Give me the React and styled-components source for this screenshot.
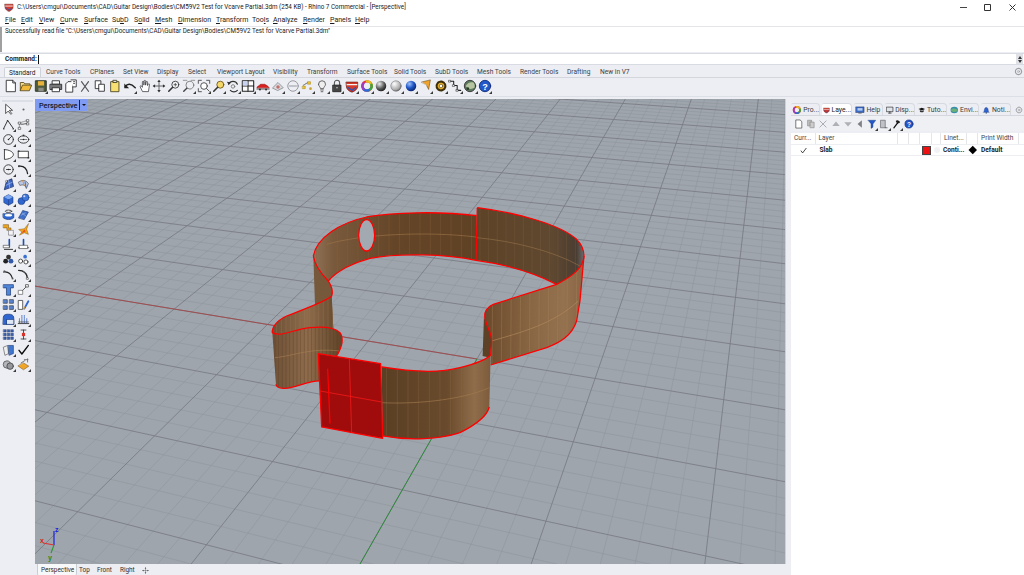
import React from "react";
import styled, { createGlobalStyle } from "styled-components";

const Global = createGlobalStyle`
  html, body { margin: 0; padding: 0; background: #eceef3; overflow: hidden; }
  body { font-family: Roboto, "Noto Sans", sans-serif; color: #1c1c20; }
  u { text-decoration-thickness: 0.6px; text-underline-offset: 1px; }
`;

const Page = styled.div`
  width: 1024px; height: 575px; display: flex; flex-direction: column; overflow: hidden; background: #eceef3;
`;
const TitleBar = styled.div`
  height: 14px; background: #fff; display: flex; align-items: center; padding-left: 4px; gap: 3px;
  font-size: 6.3px; flex: none;
`;
const TitleText = styled.span` flex: 1; white-space: nowrap; color: #202024; `;
const WinButtons = styled.div` display: flex; width: 65px; justify-content: space-between; padding-right: 7.5px; box-sizing: border-box; align-items: center; `;
const MenuBar = styled.div`
  height: 12px; background: #fff; display: flex; align-items: center; padding-left: 5px; font-size: 7px; flex: none;
  border-bottom: 1px solid #e3e5ea;
`;
const MenuItem = styled.span` width: ${p => p.$w}px; flex: none; white-space: nowrap; `;
const HistoryPane = styled.div`
  height: 25px; background: #fff; border-left: 2px solid #a0a0a0; padding: 0 0 0 3px; font-size: 6.3px; flex: none; box-sizing: border-box; line-height: 9px;
`;
const CommandRow = styled.div`
  height: 10px; margin-top: 1px; background: #fff; border-top: 1px solid #d8dbe2; border-bottom: 1px solid #d8dbe2;
  display: flex; align-items: center; padding-left: 5px; font-size: 6.5px; font-weight: 700; flex: none;
`;
const Caret = styled.span` width: 1px; height: 9px; background: #111; margin-left: 1px; `;
const Spinner = styled.span`
  margin-left: auto; margin-right: 1px; width: 7px; height: 10px; background: #dfe1e6; display: flex; flex-direction: column; align-items: center; justify-content: center; gap: 1px;
  &::before, &::after { content: ""; width: 0; height: 0; border-left: 2px solid transparent; border-right: 2px solid transparent; }
  &::before { border-bottom: 3px solid #333; }
  &::after { border-top: 3px solid #333; }
`;
const TabRow = styled.div`
  height: 11px; margin-top: 1px; display: flex; align-items: flex-end; font-size: 6.6px; border-bottom: 1px solid #d3d6dd; flex: none; padding-left: 4px; color: #3c3d42;
`;
const ToolTab = styled.span`
  width: ${p => p.$w}px; flex: none; height: 10px; line-height: 11px; padding-left: 5px; white-space: nowrap; box-sizing: border-box;
  ${p => p.$active && `background:#f6f7f9; border:1px solid #cfd2d9; border-bottom:none; border-radius:2px 2px 0 0; line-height:10px; padding-left:4px; color:#222;`}
`;
const GearSlot = styled.span` margin-left: auto; margin-right: 1px; height: 11px; display: flex; align-items: center; `;
const IconStrip = styled.div`
  height: 18px; display: flex; align-items: center; padding: 0 0 2px 4px; box-sizing: border-box; flex: none; border-bottom: 1px solid #dcdfe5; box-sizing: content-box; height: 16px;
`;
const IconCell = styled.span`
  width: ${p => p.$w || 14.8}px; height: 15px; display: flex; align-items: center; justify-content: center; position: relative; flex: none;
  ${p => p.$more && `&::after{content:"";position:absolute;right:0;bottom:0;width:0;height:0;border-left:3px solid transparent;border-bottom:3px solid #3a3a3a;}`}
`;
const Body = styled.div` flex: 1; display: flex; min-height: 0; padding-top: 2px; `;
const LeftCol = styled.div` width: 35px; flex: none; display: flex; flex-direction: column; padding-top: 1px; box-sizing: border-box; `;
const LeftGrip = styled.div` height: 2px; margin: 0 2px; background: #dcdfe6; flex: none; `;
const LeftGrid = styled.div` display: grid; grid-template-columns: 15px 15px; grid-auto-rows: 15px; padding-left: 1px; `;
const Center = styled.div` width: 751px; flex: none; display: flex; flex-direction: column; `;
const Viewport = styled.div` height: 465px; position: relative; overflow: hidden; background: #9fa5ac; flex: none; border-right: 1.5px solid #c9d1e0; box-sizing: border-box; `;
const ViewSvg = styled.svg` display: block; width: 100%; height: 100%; `;
const ViewLabel = styled.div`
  position: absolute; left: 0; top: 0; height: 12px; background: #7f9cf2; display: flex; align-items: center; padding: 0 1px 0 4px; font-size: 7.3px; font-weight: 500; color: #14161f; gap: 2px;
`;
const LabelArrow = styled.span`
  border-left: 1px solid #1c2040; height: 10px; width: 5px; display: flex; align-items: center; justify-content: center; padding-left: 1px;
  &::after { content: ""; width: 0; height: 0; border-left: 2px solid transparent; border-right: 2px solid transparent; border-top: 2px solid #111; }
`;
const ViewTabs = styled.div` height: 12px; display: flex; align-items: center; font-size: 6.4px; padding-left: 2px; color: #2c2c30; `;
const ViewTab = styled.span`
  width: ${p => p.$w}px; flex: none; padding-left: ${p => p.$pad}px; height: 12px; line-height: 12px; box-sizing: border-box; white-space: nowrap; display: flex; align-items: center;
  ${p => p.$active && `background:#f7f8fa; border-radius:0 0 3px 3px; border-left:1px solid #c8ccd4; border-right:1px solid #c8ccd4;`}
`;
const Panel = styled.div`
  width: 233px; flex: none; margin-left: 5px; display: flex; flex-direction: column; margin-top: 2px;
`;
const PanelTabs = styled.div` height: 14px; display: flex; align-items: flex-end; font-size: 6.8px; gap: 2px; border-bottom: 1px solid #d4d7de; color: #3a3b40; `;
const PanelTab = styled.span`
  width: ${p => p.$w}px; height: 12px; display: flex; align-items: center; gap: 1.500px; padding-left: 1px; box-sizing: border-box; white-space: nowrap; flex: none;
  border-top: 1px solid #d7dae1; border-right: 1px solid #d7dae1; border-radius: 2px 4px 0 0;
  ${p => p.$active && `background:#fff; color:#222;`}
`;
const PanelTools = styled.div` height: 15px; display: flex; align-items: center; padding-left: 2px; background: #eff0f4; `;
const Table = styled.div` flex: 1; background: #fff; font-size: 6.6px; display: flex; flex-direction: column; margin-top: 2px; `;
const TableHead = styled.div`
  height: 11px; display: grid; grid-template-columns: ${p => p.$cols}; background: #fff; border-bottom: 1px solid #eceef2; color: #45464b;
`;
const HeadCell = styled.span` border-right: 1px solid #e4e6ea; padding-left: 3px; line-height: 11px; white-space: nowrap; overflow: hidden; `;
const TableRow = styled.div`
  height: 10px; display: grid; grid-template-columns: ${p => p.$cols}; align-items: center; font-weight: 700; border-bottom: 1px solid #eceef2; color: #222;
`;
const RowCell = styled.span` padding-left: ${p => p.$pad || 0}px; display: flex; align-items: center; white-space: nowrap; justify-content: ${p => p.$center ? "center" : "flex-start"}; `;
const Swatch = styled.span` width: 7px; height: 7px; background: #ee1111; border: 0.5px solid #444; display: block; `;
const Dot = styled.span` width: 6px; height: 6px; border-radius: 50%; background: #f1f2f4; display: block; `;
const Diamond = styled.span` width: 5.5px; height: 5.5px; background: #000; transform: rotate(45deg); display: block; flex: none; `;

const S = ({ children, w = 14 }) => <svg width={w} height={w} viewBox="0 0 16 16" fill="none" strokeLinejoin="round" strokeLinecap="round">{children}</svg>;

const DK = "#2b2b2e";
const I = {
  file: <><path d="M3 1.5h7l3 3v10H3z" fill="#fff" stroke={DK} /><path d="M10 1.5v3h3" stroke={DK} /></>,
  open: <><path d="M1.5 13V4h4l1 1.5h6V7" fill="#f4dc8a" stroke="#5b4a1c" /><path d="M1.5 13l2.5-6h10.5l-2.5 6z" fill="#f0b93a" stroke="#5b4a1c" /></>,
  save: <><path d="M2 2h12v12H2z" fill="#4d5a3d" stroke="#1e2416" /><path d="M4.5 2.5h7v5h-7z" fill="#e7b33b" /><path d="M5 10h6v4H5z" fill="#8d8f88" /></>,
  print: <><path d="M4 2h8v4H4z" fill="#fff" stroke={DK} /><path d="M1.5 6h13v6h-13z" fill="#777" stroke={DK} /><path d="M4 10h8v4.5H4z" fill="#fff" stroke={DK} /></>,
  props: <><path d="M5 3h5v12H2V6z" fill="#fff" stroke={DK} /><path d="M8 1h6v8h-4" stroke={DK} fill="#fff" /><path d="M11 3h1M11 5h1" stroke={DK} /></>,
  cut: <><path d="M4 3l8 11M12 3l-8 11" stroke="#55565a" strokeWidth="1.4" /></>,
  copy: <><path d="M3 2h6v9H3z" fill="#fff" stroke={DK} /><path d="M7 6h6v8H7z" fill="#fff" stroke={DK} /></>,
  paste: <><path d="M3.5 3h9v11.5h-9z" fill="#f7df72" stroke="#4a4420" /><path d="M6 1.5h4V4H6z" fill="#ddd" stroke="#4a4420" /></>,
  undo: <><path d="M2.5 9C5 5 9 5 14 10" stroke="#222" strokeWidth="1.7" /><path d="M1.5 5v5.5H7" fill="#222" /></>,
  hand: <><path d="M5 14L2.5 9c-.5-1 1-2 1.7-.7L5 9.5V3.5c0-1.3 1.6-1.3 1.7 0V7l.3-4.500c0-1.300 1.700-1.300 1.700 0V7l.6-3.500c.2-1.200 1.700-1 1.600.2V7.500l.7-1.500c.5-1 1.800-.5 1.500.6L12 14z" fill="#fff" stroke={DK} strokeWidth=".8" /></>,
  pan: <><path d="M8 1.500v13M1.500 8h13" stroke="#555" /><path d="M8 1l-2 2.500h4zM8 15l-2-2.500h4zM1 8l2.500-2v4zM15 8l-2.500-2v4z" fill="#333" /></>,
  zoom: <><circle cx="9.500" cy="6.500" r="4" fill="#f4f5f7" stroke="#333" /><path d="M6.500 9.500L2 14" stroke="#333" strokeWidth="1.800" /><path d="M8 6.500h3M9.500 5v3" stroke="#333" strokeWidth=".8" /></>,
  zoomDash: <><circle cx="9" cy="7" r="4.500" stroke="#777" /><path d="M5.500 10.500L2 14" stroke="#444" strokeWidth="1.600" /><path d="M1.500 1.500h4M10.500 1.500h4" stroke="#888" strokeDasharray="1.500 1" /></>,
  zoomExt: <><circle cx="8" cy="8" r="3.800" fill="#fff" stroke="#444" /><path d="M11 11l3 3M1.500 5V1.500H5M11 1.500h3.500V5M1.500 11v3.500H5" stroke="#444" /></>,
  zoomSel: <><circle cx="9.500" cy="6.500" r="4" fill="#f6d86a" stroke="#6c5514" /><path d="M6.500 9.500L2 14" stroke="#333" strokeWidth="1.800" /></>,
  rotate: <><path d="M3 6a5.500 5.500 0 0 1 10 0" stroke="#333" strokeWidth="1.300" /><path d="M13 13a5.500 5.500 0 0 1-8 0" stroke="#333" strokeWidth="1.300" /><circle cx="8" cy="8.500" r="2" stroke="#777" /><path d="M1 3l2 3.500L6 4z" fill="#333" /></>,
  grid4: <><path d="M1.500 2h13v12h-13z" fill="#fdfdfd" stroke="#222" strokeWidth="1.200" /><path d="M8 2v12M1.500 8h13" stroke="#222" strokeWidth="1.200" /><path d="M2 2.500h5.500v5H2z" fill="#c9d5f0" /></>,
  car: <><path d="M1 10c0-2 3-2 4-4h5c1 1 4 1.500 5 4z" fill="#d8201e" stroke="#8a1010" strokeWidth=".6" /><path d="M1 11.500h14" stroke="#555" /><circle cx="4.500" cy="12" r="1.200" fill="#333" /><circle cx="11.500" cy="12" r="1.200" fill="#333" /></>,
  tool1: <><path d="M2 10l6-6 6 6-6 3z" fill="#d9dade" stroke="#8d8f96" /><circle cx="8" cy="9" r="2" fill="#c2716a" /></>,
  clock: <><circle cx="8" cy="8" r="6" stroke="#8d8f96" /><path d="M4 8h8" stroke="#8d8f96" /></>,
  lights: <><path d="M3 8h3v3H3zM9 3h3v3H9z" fill="#eec12f" stroke="#9a7b10" strokeWidth=".5" /><path d="M4 7l5-3" stroke="#555" strokeDasharray="1 1" /><circle cx="12" cy="11" r="1.500" fill="#c7a128" /></>,
  bulb: <><path d="M4 6a4 4 0 0 1 8 0c0 2-2 3-2.300 5H6.300C6 9 4 8 4 6z" fill="#eee" stroke="#555" /><path d="M6.500 12.500h3M7 14.500h2" stroke="#555" /></>,
  lock: <><path d="M5 7V4.500a3 3 0 0 1 6 0V7" stroke="#555" strokeWidth="1.200" /><path d="M3.500 7h9v7.500h-9z" fill="#444" stroke="#222" /><path d="M7.500 10h1" stroke="#ddd" /></>,
  layers: <><path d="M1.500 3.500h13v5c0 3-4 6-6.500 6.500C5 14.500 1.500 11.500 1.500 8.500z" fill="#d63a2b" stroke="#57150f" strokeWidth=".7" /><path d="M2.500 6.500h11" stroke="#f2f2f2" strokeWidth="1.500" /><path d="M4 10l4 3 4-3" stroke="#2853b8" strokeWidth="1.500" /></>,
  wheel: <><circle cx="8" cy="8" r="5.300" stroke="#e33" strokeWidth="2.800" /><path d="M8 2.700a5.300 5.300 0 0 1 5 3.500" stroke="#e6c21d" strokeWidth="2.800" /><path d="M13 6.500a5.300 5.300 0 0 1-3 6.300" stroke="#36a83c" strokeWidth="2.800" /><path d="M10 12.800a5.300 5.300 0 0 1-6-1.500" stroke="#2b6cdc" strokeWidth="2.800" /><path d="M4 11.300a5.300 5.300 0 0 1 0-6.500" stroke="#a43ac0" strokeWidth="2.800" /></>,
  ball1: <><defs><radialGradient id="gb" cx=".35" cy=".3" r=".8"><stop offset="0" stopColor="#ededed" /><stop offset=".6" stopColor="#555" /><stop offset="1" stopColor="#111" /></radialGradient></defs><circle cx="8" cy="8" r="6" fill="url(#gb)" /></>,
  ball2: <><defs><radialGradient id="gw" cx=".35" cy=".3" r=".8"><stop offset="0" stopColor="#fff" /><stop offset=".7" stopColor="#aaa" /><stop offset="1" stopColor="#555" /></radialGradient></defs><circle cx="8" cy="8" r="6" fill="url(#gw)" stroke="#555" strokeWidth=".5" /></>,
  ball4: <><defs><radialGradient id="gn" cx=".35" cy=".3" r=".8"><stop offset="0" stopColor="#9cc1f8" /><stop offset=".5" stopColor="#1f56c8" /><stop offset="1" stopColor="#061a5c" /></radialGradient></defs><circle cx="8" cy="8" r="6" fill="url(#gn)" /></>,
  pointer: <><path d="M3 3.500L13 1l-2 11-2.500-5z" fill="#f0a32a" stroke="#5e3c10" strokeWidth=".6" /><path d="M3 3.500l5.500 3.500" stroke="#fff" strokeWidth=".6" /></>,
  gear: <><circle cx="8" cy="8" r="5" fill="#e8b02b" stroke="#3c2e0c" strokeWidth="2.400" strokeDasharray="1.800 1.300" /><circle cx="8" cy="8" r="2" fill="#fff" stroke="#3c2e0c" strokeWidth=".6" /></>,
  steps: <><path d="M2 2.500h4.500v5h4v5.500h4" stroke="#222" strokeWidth="1.200" /><path d="M1 1.500h2v2H1zM5.500 6.500h2v2h-2zM9.500 12h2v2h-2z" fill="#fff" stroke="#222" strokeWidth=".6" /></>,
  earth: <><circle cx="8" cy="8" r="6.500" fill="#5c7a5a" stroke="#333" /><path d="M3 8c2-3 5-5 9-4 1 1 2 4 1 6-3 2-7 2-10-2z" fill="#b6c4a0" /><circle cx="5.500" cy="11" r="1.500" fill="#2c3c2c" /></>,
  help: <><circle cx="8" cy="8" r="6.500" fill="#2457c8" stroke="#0e2a78" /><text x="8" y="12" textAnchor="middle" fontSize="10.500" fontWeight="700" fill="#fff" fontFamily="Liberation Sans">?</text></>,

  select: <><path d="M4.500 2v11l3-3 3.500 4 1-1-3-4h3.500z" fill="#fff" stroke="#333" /></>,
  point: <><circle cx="8" cy="8" r="1.300" fill="#666" /></>,
  polyline: <><path d="M2 13L7 3l7 10" stroke="#222" strokeWidth="1.100" /><path d="M1.500 12.500h1.500v1.500H1.500zM6 2.500h1.500v1.500H6zM13 12.500h1.500v1.500H13z" fill="#333" /></>,
  cvcurve: <><path d="M3 12.500V6L13 3v3" stroke="#888" strokeDasharray="1 1" /><path d="M3 6c3 4 6 0 10 1" stroke="#333" /><path d="M2 5h2.500v2.500H2zM12 2h2.500v2.500H12zM2 11.500h2.500V14H2zM12 6h2.500v2.500H12z" fill="#fff" stroke="#333" strokeWidth=".7" /></>,
  circleR: <><circle cx="8" cy="8" r="6" stroke="#222" /><path d="M8 8l4-4" stroke="#222" /><circle cx="8" cy="8" r="1" fill="#222" /></>,
  ellipse: <><ellipse cx="8" cy="8" rx="6.500" ry="4.500" stroke="#222" /><path d="M4 8h8" stroke="#666" /><circle cx="8" cy="8" r="1" fill="#222" /><path d="M7 2h2v2H7z" fill="#333" /></>,
  arc: <><path d="M3 2v12C9 14 14 11 14 8 14 5 9 2 3 2z" fill="#fff" stroke="#222" /></>,
  rect: <><path d="M2 4h12v8H2z" fill="#fff" stroke="#222" /><path d="M1 3h2v2H1zM13 11h2v2h-2z" fill="#333" /></>,
  polygon: <><circle cx="8" cy="8" r="5.800" stroke="#222" /><path d="M5.500 8h5" stroke="#222" /><circle cx="8" cy="8" r="1" fill="#222" /></>,
  curve: <><path d="M2 4c7-1 10 3 11 9" stroke="#222" strokeWidth="1.600" /><circle cx="2.500" cy="4" r="1.300" fill="#444" /></>,
  mesh: <><path d="M3 14L5.500 4 12 1l2 9z" fill="#3b66c4" stroke="#142b66" /><path d="M5 9l8-4M8 2.500L9.500 12" stroke="#cfe0ff" strokeWidth=".6" /><circle cx="5.500" cy="4" r="1.200" fill="#fff" stroke="#222" strokeWidth=".5" /></>,
  patch: <><path d="M2 5c4-3 9-3 12 2l-2.500 6C10 8 7 8 4 9z" fill="#b9c8e8" stroke="#333" strokeWidth=".7" /><path d="M7 3.500L9 9" stroke="#e0851a" /><path d="M10 5l1 6" stroke="#2c5bbf" /></>,
  box: <><path d="M2.500 5L8 2l5.500 3v7L8 15l-5.500-3z" fill="#2f66cf" stroke="#123070" strokeWidth=".7" /><path d="M2.500 5L8 8l5.500-3L8 2z" fill="#7ea8f2" /><path d="M8 8v7" stroke="#123070" strokeWidth=".5" /></>,
  spheres: <><circle cx="5.500" cy="10" r="4.300" fill="#2f66cf" stroke="#123070" strokeWidth=".6" /><circle cx="10.500" cy="5.500" r="4.300" fill="#3f77dc" stroke="#123070" strokeWidth=".6" /><circle cx="9" cy="4" r="1.300" fill="#c9dcff" /></>,
  cyl: <><ellipse cx="8" cy="4" rx="4" ry="1.500" stroke="#333" /><path d="M1.500 7h13v5c-3 3-10 3-13 0z" fill="#2f66cf" stroke="#123070" strokeWidth=".7" /><ellipse cx="8" cy="9" rx="4.500" ry="1.500" fill="#fff" /></>,
  slab: <><path d="M2 12l5-9 7 2-5 9z" fill="#3f6fc9" stroke="#142b66" strokeWidth=".7" /><path d="M6 6l5 4M5 9l5-3" stroke="#b7cbf2" strokeWidth=".6" /></>,
  moveO: <><path d="M2 2h6v4h3v3H6V6H2z" fill="#eda41f" stroke="#6c4609" strokeWidth=".6" /><path d="M8 9h6v6H8z" fill="#f3f3f5" stroke="#8a8a90" strokeDasharray="1 1" /></>,
  star: <><path d="M14 1L9 7l-7 1 4 3-3 4 6-3 5 2-2-6z" fill="#f2a81c" stroke="#7a4a08" strokeWidth=".5" /><path d="M9 8l-4 5 6-3z" fill="#e8501a" /></>,
  flag1: <><path d="M3 14h10" stroke="#333" strokeWidth="1.200" /><path d="M9 2v9" stroke="#1f4fb0" strokeWidth="2" /><path d="M2 9h7v3H2z" fill="#fff" stroke="#333" strokeWidth=".7" /></>,
  flag2: <><path d="M2 12h12" stroke="#333" strokeWidth="1.200" /><path d="M8 2v9" stroke="#1f4fb0" strokeWidth="2" /><path d="M3 9h10v4H3z" fill="#fff" stroke="#333" strokeWidth=".7" /></>,
  blobK: <><circle cx="8" cy="5" r="3" fill="#333" /><circle cx="4.500" cy="10" r="3" fill="#222" /><circle cx="11" cy="10" r="3" fill="#3359a8" /></>,
  blobW: <><circle cx="10" cy="4.500" r="2.300" fill="#3b6fd0" /><circle cx="4.500" cy="10" r="2.500" fill="#fff" stroke="#333" /><circle cx="11" cy="11" r="2.500" fill="#fff" stroke="#333" /></>,
  fillet: <><path d="M2 5c6-1 9 2 11 8" stroke="#222" strokeWidth="1.400" /><path d="M2 3h2v2H2z" fill="#555" /><path d="M12 12h2v2h-2z" fill="#555" /></>,
  fillet2: <><path d="M2 3c6 0 10 3 11 10" stroke="#222" strokeWidth="1.400" /><path d="M8 4l4 3" stroke="#777" strokeDasharray="1 1" /><path d="M12 12h2v2h-2z" fill="#fff" stroke="#333" strokeWidth=".6" /></>,
  tee: <><path d="M2 2h12v4h-3.500v9H5.500V6H2z" fill="#4f86d8" stroke="#123070" strokeWidth=".8" /></>,
  scale: <><path d="M2 9h5v5H2z" fill="#fff" stroke="#777" /><path d="M11 2h3v3h-3z" fill="#fff" stroke="#555" /><path d="M7 9l4-4" stroke="#333" strokeDasharray="1.500 1" /></>,
  array: <><path d="M2 2h4.500v4.500H2zM9.500 2H14v4.500H9.500zM2 9.500h4.500V14H2zM9.500 9.500H14V14H9.500z" fill="#5a84d0" stroke="#222" strokeWidth=".7" /></>,
  editc: <><path d="M2 3h5v11H2z" fill="#fff" stroke="#444" /><path d="M9 13l5-9" stroke="#2f66cf" strokeWidth="2.200" /><path d="M8.500 14l1-3" stroke="#e8a01f" /></>,
  boxB: <><path d="M1.500 6c0-4 3-4.500 6.500-4.500s6.500 1 6.500 4.500v8h-13z" fill="#2f66cf" stroke="#123070" strokeWidth=".8" /><path d="M6 8h8.500v6H6z" fill="#dfe6f5" stroke="#123070" strokeWidth=".7" /></>,
  ruler: <><path d="M1.500 13h13" stroke="#222" /><path d="M3 12V6M6 12V3M9 12V3M12 12V6" stroke="#3b66c4" strokeDasharray="1 1" /><path d="M2 11h12" stroke="#222" strokeWidth=".7" /></>,
  dots: <><path d="M2 2h3v3H2zM6.500 2h3v3h-3zM11 2h3v3h-3zM2 6.500h3v3H2zM6.500 6.500h3v3h-3zM11 6.500h3v3h-3zM2 11h3v3H2zM6.500 11h3v3h-3zM11 11h3v3h-3z" fill="#3d63b0" stroke="#14285e" strokeWidth=".5" /></>,
  redfig: <><path d="M5 2.500h6M5 13.500h6M8 2.500v11" stroke="#333" /><path d="M6 6h4v4H6z" fill="#d8332b" /></>,
  books: <><path d="M2 5l5-2 1 10-4 2z" fill="#eee" stroke="#444" strokeWidth=".7" /><path d="M8 3h6v10l-5 2z" fill="#3f77cf" stroke="#123070" strokeWidth=".7" /></>,
  check: <><path d="M2.500 9l3.500 4.500L14 3" stroke="#0b0b0b" strokeWidth="1.700" /></>,
  sphereG: <><circle cx="6" cy="8" r="4.500" fill="#b4b6bb" stroke="#555" /><circle cx="10" cy="10" r="4" fill="#94969c" stroke="#444" /></>,
  diamondO: <><path d="M8 6l6.500 4-6.500 4.500L1.500 10z" fill="#f0a52a" stroke="#6c4609" strokeWidth=".6" /><path d="M9 2h4.500M13 1v4" stroke="#666" /><path d="M5 6L10 3" stroke="#666" /></>,

  globeHelp: <><path d="M1.500 3h13v9h-13z" fill="#3a6bc4" stroke="#14285e" strokeWidth=".7" /><path d="M4 5h8v4H4z" fill="#b5cdf0" /><path d="M6 13h4" stroke="#333" /></>,
  monitor: <><path d="M1.500 2h13v9.500h-13z" fill="#dfe3ea" stroke="#111" strokeWidth="1.200" /><path d="M5 14.500h6M8 11.500v3" stroke="#111" strokeWidth="1.200" /></>,
  cap: <><path d="M1 6l7-3 7 3-7 3z" fill="#141414" /><path d="M4 8v3.500c2 1.500 6 1.500 8 0V8L8 10z" fill="#333" /></>,
  env: <><ellipse cx="8" cy="8" rx="7" ry="6" fill="#3a8fa8" /><path d="M1 8c3-4 9-4 14 0-2 4-10 6-14 0z" fill="#6cb07a" /></>,
  bell: <><path d="M3 12c1.500-1 1-4 2-6.500a3.200 3.200 0 0 1 6 0c1 2.500.5 5.500 2 6.500z" fill="#2d63d4" stroke="#10306e" strokeWidth=".7" /><circle cx="8" cy="13.500" r="1.300" fill="#10306e" /></>,
  newL: <><path d="M3.500 1.500h6.500l2.500 3v10h-9z" fill="#fff" stroke="#333" /></>,
  dup: <><path d="M3 2h6v9H3z" fill="#bbb" stroke="#888" /><path d="M7 5h6v9H7z" fill="#ccc" stroke="#888" /></>,
  xg: <><path d="M3 3l10 10M13 3L3 13" stroke="#a8aab0" strokeWidth="1.500" /></>,
  upg: <><path d="M2 11h12L8 4z" fill="#aeb0b6" /></>,
  dng: <><path d="M2 5h12l-6 7z" fill="#aeb0b6" /></>,
  lfg: <><path d="M11 2v12L4 8z" fill="#7e8087" /></>,
  funnel: <><path d="M2 2h12L9.500 8v5l-3 2V8z" fill="#2258c9" stroke="#10306e" strokeWidth=".6" /></>,
  pageg: <><path d="M3 2h7v12H3z" fill="#bfc1c6" stroke="#5a5a60" /><path d="M10 14h3" stroke="#333" /></>,
  hammer: <><path d="M3 14l6-8" stroke="#111" strokeWidth="2" /><path d="M6 3c2-2 5-1 7 2l-2.500 2-1-1L8 7z" fill="#1c1c1c" /></>,
  set: <><circle cx="8" cy="8" r="5.500" stroke="#9c9ea4" strokeWidth="2" strokeDasharray="2 1" /><circle cx="8" cy="8" r="2" fill="#cfd1d6" stroke="#888" strokeWidth=".6" /></>,
};

const Icon = ({ n, w }) => <S w={w}>{I[n]}</S>;

const titles = "C:\\Users\\cmgui\\Documents\\CAD\\Guitar Design\\Bodies\\CM59V2 Test for Vcarve Partial.3dm (254 KB) - Rhino 7 Commercial - [Perspective]";
const hist = 'Successfully read file "C:\\Users\\cmgui\\Documents\\CAD\\Guitar Design\\Bodies\\CM59V2 Test for Vcarve Partial.3dm"';

const menus = [["", "F", "ile", 16], ["", "E", "dit", 18], ["", "V", "iew", 21], ["", "C", "urve", 24], ["", "S", "urface", 28], ["Su", "b", "D", 22], ["S", "o", "lid", 21], ["", "M", "esh", 23], ["", "D", "imension", 38], ["", "T", "ransform", 36], ["Too", "l", "s", 21], ["", "A", "nalyze", 30], ["", "R", "ender", 27], ["", "P", "anels", 25], ["", "H", "elp", 16]];
const tabs = [["Standard", 37], ["Curve Tools", 44], ["CPlanes", 33], ["Set View", 34], ["Display", 31], ["Select", 29], ["Viewport Layout", 56], ["Visibility", 34], ["Transform", 40], ["Surface Tools", 47], ["Solid Tools", 41], ["SubD Tools", 42], ["Mesh Tools", 43], ["Render Tools", 47], ["Drafting", 33], ["New in V7", 36]];

const topIcons = [["file"], ["open"], ["save", 1], ["print"], ["props"], ["cut"], ["copy"], ["paste"], ["undo", 1], ["hand"], ["pan"], ["zoom"], ["zoomDash", 1], ["zoomExt", 1], ["zoomSel", 1], ["rotate", 1], ["grid4", 1], ["car", 1], ["tool1", 1], ["clock", 1], ["lights", 1], ["bulb", 1], ["lock", 1], ["layers", 1], ["wheel", 1], ["ball1", 1], ["ball2", 1], ["ball4", 1], ["pointer", 1], ["gear", 1], ["steps", 1], ["earth", 1], ["help", 1]];
const leftIcons = [["select"], ["point"], ["polyline", 1], ["cvcurve", 1], ["circleR", 1], ["ellipse", 1], ["arc", 1], ["rect", 1], ["polygon", 1], ["curve", 1], ["mesh", 1], ["patch", 1], ["box", 1], ["spheres", 1], ["cyl", 1], ["slab", 1], ["moveO", 1], ["star"], ["flag1", 1], ["flag2", 1], ["blobK", 1], ["blobW", 1], ["fillet", 1], ["fillet2", 1], ["tee", 1], ["scale", 1], ["array", 1], ["editc", 1], ["boxB", 1], ["ruler", 1], ["dots", 1], ["redfig", 1], ["books", 1], ["check"], ["sphereG", 1], ["diamondO", 1]];
const panelTools = [["newL"], ["dup"], ["xg"], ["upg"], ["dng"], ["lfg"], ["funnel", 1], ["pageg", 1], ["hammer", 1], ["help"]];
const panelTabs = [["wheel", "Pro...", 29], ["layers", "Laye...", 30], ["globeHelp", "Help", 29], ["monitor", "Disp...", 30], ["cap", "Tuto...", 30], ["env", "Envi...", 30], ["bell", "Noti...", 30]];

/* perspective ground grid */
const O = [477, 358], Vr = [-2300, -100], Vg = [792, -194], A = -0.0408, B = -0.0958;
const proj = (i, j) => {
  const a = A * i, b = B * j, d = 1 + a + b;
  return [(O[0] + a * Vr[0] + b * Vg[0]) / d, (O[1] + a * Vr[1] + b * Vg[1]) / d];
};
const seg = (p, q) => `M${p[0].toFixed(1)},${p[1].toFixed(1)}L${q[0].toFixed(1)},${q[1].toFixed(1)}`;
const gridPaths = () => {
  let minor = "", major = "";
  for (let k = -300; k <= 40; k++) {
    const v = k / 5;
    const l1 = seg(proj(v, -60), proj(v, 4.5));
    if (k % 5 === 0) major += l1; else minor += l1;
  }
  for (let k = -300; k <= 25; k++) {
    const v = k / 5;
    const l2 = seg(proj(-60, v), proj(8, v));
    if (k % 5 === 0) major += l2; else minor += l2;
  }
  return { minor, major };
};
const G = gridPaths();
const cols = "24.500px 82.500px 11px 11px 12px 9px 26px 11px 41px 1fr";

const stripeXs = (from, to, step) => { const a = []; for (let x = from; x <= to; x += step) a.push(x); return a; };
const Stripes = ({ id, from, to, step, color = "#a9825a", slant = 0 }) => (
  <g clipPath={`url(#${id})`}>
    {stripeXs(from, to, step).map((x, k) => <path key={k} d={`M${x},0L${x + slant},750`} stroke={color} strokeWidth="1.800" opacity=".6" />)}
  </g>
);

const P = {
  back: "M160,165 C170,110 240,65 320,48 C400,34 540,30 650,44 L648,178 C560,160 420,155 330,172 C280,185 230,210 205,240 C185,220 165,195 160,165 Z",
  backR: "M652,20 C770,35 900,70 950,115 C965,130 972,150 972,165 C970,200 940,225 890,250 C830,220 740,190 648,178 Z",
  outR: "M972,165 C970,200 940,225 890,250 L700,310 C680,318 672,335 675,350 C678,375 695,395 695,420 L692,492 L860,440 C900,425 935,405 950,360 L960,300 Z",
  strip: "M672,345 C678,375 695,395 695,420 L690,470 L668,465 Z",
  front: "M365,498 C450,512 540,516 600,500 C640,490 680,475 692,462 L688,620 C680,650 640,675 600,695 C540,715 450,720 368,705 Z",
  leftBack: "M160,165 C165,195 185,220 205,240 C215,255 220,270 215,285 L220,385 L165,385 L165,310 Z",
  leftBand: "M215,285 C200,300 150,318 80,345 C50,358 35,380 37,395 C60,410 100,385 150,380 C190,376 225,380 240,395 C250,410 248,435 230,465 L200,460 L220,385 Z",
  leftLow: "M37,395 C60,410 100,385 150,380 C190,376 225,380 240,395 C250,410 248,435 230,465 L175,458 L178,540 C140,540 100,565 70,562 C55,562 48,555 48,550 Z",
};
const redLines = [
  "M160,165 C170,110 240,65 320,48 C400,34 540,30 650,44",
  "M160,165 C165,195 185,220 205,240 C215,255 220,270 215,285 C200,300 150,318 80,345 C50,358 35,380 37,395 C60,410 100,385 150,380 C190,376 225,380 240,395 C250,410 248,435 230,465",
  "M48,550 C48,555 55,562 70,562 C100,565 140,540 178,540",
  "M205,240 C230,210 280,185 330,172 C420,155 560,160 648,178 C740,190 830,220 890,250",
  "M652,20 L648,178",
  "M652,20 C770,35 900,70 950,115 C965,130 972,150 972,165 C970,200 940,225 890,250 L700,310 C680,318 672,335 675,350 C678,375 695,395 695,420 L692,462 C680,475 640,490 600,500 C540,516 450,512 365,498",
  "M972,165 L960,300 L950,360 C935,405 900,425 860,440 L692,492",
  "M688,618 C680,650 640,675 600,695 C540,715 450,720 368,705",
];

const Scene = () => (
  <g transform="translate(260 200) scale(.3333)">
    <defs>
      <clipPath id="cBack"><path d={P.back} /></clipPath>
      <clipPath id="cBackR"><path d={P.backR} /></clipPath>
      <clipPath id="cOut"><path d={P.outR} /></clipPath>
      <clipPath id="cFront"><path d={P.front} /></clipPath>
      <clipPath id="cLeft"><path d={P.leftLow} /></clipPath>
      <clipPath id="cBand"><path d={P.leftBand} /></clipPath>
      <linearGradient id="gBack" x1="0" x2="1" y1="0" y2="0">
        <stop offset="0" stopColor="#8f7358" /><stop offset=".12" stopColor="#7a5a3c" /><stop offset=".5" stopColor="#654527" /><stop offset="1" stopColor="#5f4124" />
      </linearGradient>
      <linearGradient id="gBackR" x1="0" x2="1" y1="0" y2="0">
        <stop offset="0" stopColor="#5d4327" /><stop offset=".7" stopColor="#5f4830" /><stop offset=".93" stopColor="#4a3d32" /><stop offset="1" stopColor="#6c6a6d" />
      </linearGradient>
      <linearGradient id="gOut" x1="0" x2="1" y1="0" y2="0">
        <stop offset="0" stopColor="#6a4a2c" /><stop offset=".5" stopColor="#8b6845" /><stop offset=".8" stopColor="#94714f" /><stop offset="1" stopColor="#8a6546" />
      </linearGradient>
      <linearGradient id="gFront" x1="0" x2="1" y1="0" y2="0">
        <stop offset="0" stopColor="#5a3f24" /><stop offset=".6" stopColor="#694a2c" /><stop offset=".85" stopColor="#8f6d4b" /><stop offset="1" stopColor="#7c5b3c" />
      </linearGradient>
      <linearGradient id="gLeft" x1="0" x2="1" y1="0" y2="0">
        <stop offset="0" stopColor="#6d5036" /><stop offset=".5" stopColor="#8e6c4c" /><stop offset="1" stopColor="#5f4428" />
      </linearGradient>
    </defs>
    <path d={P.back} fill="url(#gBack)" />
    <Stripes id="cBack" from={170} to={650} step={31} color="#88643f" />
    <path d="M200,130 C300,100 500,90 648,108" stroke="#9a7248" strokeWidth="2" fill="none" clipPath="url(#cBack)" />
    <ellipse cx="320" cy="103" rx="24" ry="47" fill="#a3a9b0" stroke="#ff0000" strokeWidth="3.800" />
    <path d={P.backR} fill="url(#gBackR)" />
    <Stripes id="cBackR" from={660} to={970} step={26} color="#7e6040" />
    <path d="M650,110 C760,120 880,150 960,195" stroke="#927048" strokeWidth="2" fill="none" clipPath="url(#cBackR)" />
    <path d={P.leftBack} fill="#76583a" />
    <path d={P.leftBand} fill="url(#gLeft)" />
    <Stripes id="cBand" from={50} to={240} step={14} color="#9c7a56" />
    <path d={P.outR} fill="url(#gOut)" />
    <Stripes id="cOut" from={700} to={960} step={28} color="#a78660" slant={-6} />
    <path d="M695,420 C780,395 880,370 955,300" stroke="#b08a5e" strokeWidth="2" fill="none" clipPath="url(#cOut)" />
    <path d={P.strip} fill="#5c4126" />
    <path d={P.leftLow} fill="url(#gLeft)" />
    <Stripes id="cLeft" from={45} to={240} step={11} color="#5a4028" />
    <path d="M45,470 C100,465 150,440 240,450" stroke="#a88055" strokeWidth="1.800" fill="none" clipPath="url(#cLeft)" />
    <path d={P.front} fill="url(#gFront)" />
    <Stripes id="cFront" from={380} to={690} step={32} color="#8d6a45" />
    <path d="M365,605 C450,610 600,600 688,560" stroke="#a27a4f" strokeWidth="2" fill="none" clipPath="url(#cFront)" />
    <g fill="none" stroke="#ff0000" strokeWidth="3.800" strokeLinejoin="round">
      {redLines.map((d, k) => <path key={k} d={d} />)}
    </g>
    <path d="M175,458 L362,488 L368,712 L185,678 Z" fill="#a00c0c" stroke="#ff0000" strokeWidth="3.800" strokeLinejoin="round" />
    <path d="M268,473 L275,695 M180,570 L365,603" stroke="#f01818" strokeWidth="2.500" />
    <path d="M203,503 L210,668" stroke="#ff0000" strokeWidth="3.500" />
  </g>
);

const Gizmo = () => (
  <g strokeWidth="1.200" fontFamily="Liberation Sans" fontWeight="700" fontSize="7">
    <path d="M54,544 L54,530" stroke="#1a22e0" />
    <path d="M54,544 L43,542" stroke="#e03030" />
    <path d="M54,544 L51,552" stroke="#2c9a30" />
    <text x="55" y="531" fill="#1a22e0">z</text>
    <text x="40" y="542" fill="#e01818">x</text>
    <text x="48" y="559" fill="#228a28">y</text>
  </g>
);

export default function App() {
  return (
    <Page>
      <Global />
      <TitleBar>
        <Icon n="layers" w={10} />
        <TitleText>{titles}</TitleText>
        <WinButtons>
          <svg width="9" height="9" viewBox="0 0 9 9"><path d="M1 4.500h7" stroke="#444" /></svg>
          <svg width="9" height="9" viewBox="0 0 9 9"><path d="M1.500 1.500h6v6h-6z" stroke="#333" fill="none" /></svg>
          <svg width="9" height="9" viewBox="0 0 9 9"><path d="M1.500 1.500l6 6M7.500 1.500l-6 6" stroke="#333" /></svg>
        </WinButtons>
      </TitleBar>
      <MenuBar>{menus.map(([a, b, c, w]) => <MenuItem key={a + b + c} $w={w}>{a}<u>{b}</u>{c}</MenuItem>)}</MenuBar>
      <HistoryPane>{hist}</HistoryPane>
      <CommandRow>Command:<Caret /><Spinner /></CommandRow>
      <TabRow>
        {tabs.map(([t, w], k) => <ToolTab key={t} $active={k === 0} $w={w}>{t}</ToolTab>)}
        <GearSlot><Icon n="set" w={9} /></GearSlot>
      </TabRow>
      <IconStrip>
        {topIcons.map(([n, m], k) => <IconCell key={k} $more={m}><Icon n={n} /></IconCell>)}
      </IconStrip>
      <Body>
        <LeftCol>
          <LeftGrip />
          <LeftGrid>
            {leftIcons.map(([n, m], k) => <IconCell key={k} $w={15} $more={m}><Icon n={n} w={13} /></IconCell>)}
          </LeftGrid>
        </LeftCol>
        <Center>
          <Viewport>
            <ViewSvg viewBox="35 98 750 465" preserveAspectRatio="none">
              <rect x="35" y="98" width="750" height="465" fill="#9fa5ac" />
              <path d={G.minor} stroke="#8e949c" strokeWidth=".55" fill="none" />
              <path d={G.major} stroke="#787b84" strokeWidth=".85" fill="none" />
              <path d={seg(proj(-60, 0), proj(0, 0))} stroke="#a04e50" strokeWidth="1" fill="none" />
              <path d={seg(proj(0, 0), proj(0, 4.5))} stroke="#2f8a3c" strokeWidth="1" fill="none" />
              <Scene />
              <Gizmo />
            </ViewSvg>
            <ViewLabel>Perspective<LabelArrow /></ViewLabel>
          </Viewport>
          <ViewTabs>
            <ViewTab $active $w={40} $pad={3}>Perspective</ViewTab>
            <ViewTab $w={20} $pad={2}>Top</ViewTab>
            <ViewTab $w={23} $pad={0}>Front</ViewTab>
            <ViewTab $w={22} $pad={0}>Right</ViewTab>
            <ViewTab $w={12} $pad={0}><Icon n="pan" w={7} /></ViewTab>
          </ViewTabs>
        </Center>
        <Panel>
          <PanelTabs>
            {panelTabs.map(([n, t, w], k) => <PanelTab key={t} $w={w} $active={k === 1}><Icon n={n} w={10} />{t}</PanelTab>)}
            <GearSlot><Icon n="set" w={8} /></GearSlot>
          </PanelTabs>
          <PanelTools>
            {panelTools.map(([n, m], k) => <IconCell key={k} $w={12.2} $more={m}><Icon n={n} w={10} /></IconCell>)}
          </PanelTools>
          <Table>
            <TableHead $cols={cols}>
              <HeadCell>Curr...</HeadCell><HeadCell>Layer</HeadCell><HeadCell /><HeadCell /><HeadCell /><HeadCell /><HeadCell>Linet...</HeadCell><HeadCell /><HeadCell>Print Width</HeadCell><span />
            </TableHead>
            <TableRow $cols={cols}>
              <RowCell $center><Icon n="check" w={7} /></RowCell>
              <RowCell $pad={4}>Slab</RowCell>
              <span /><span />
              <RowCell $center><Swatch /></RowCell>
              <RowCell $center><Dot /></RowCell>
              <RowCell $pad={2}>Conti...</RowCell>
              <RowCell $center><Diamond /></RowCell>
              <RowCell $pad={3}>Default</RowCell>
              <span />
            </TableRow>
          </Table>
        </Panel>
      </Body>
    </Page>
  );
}
